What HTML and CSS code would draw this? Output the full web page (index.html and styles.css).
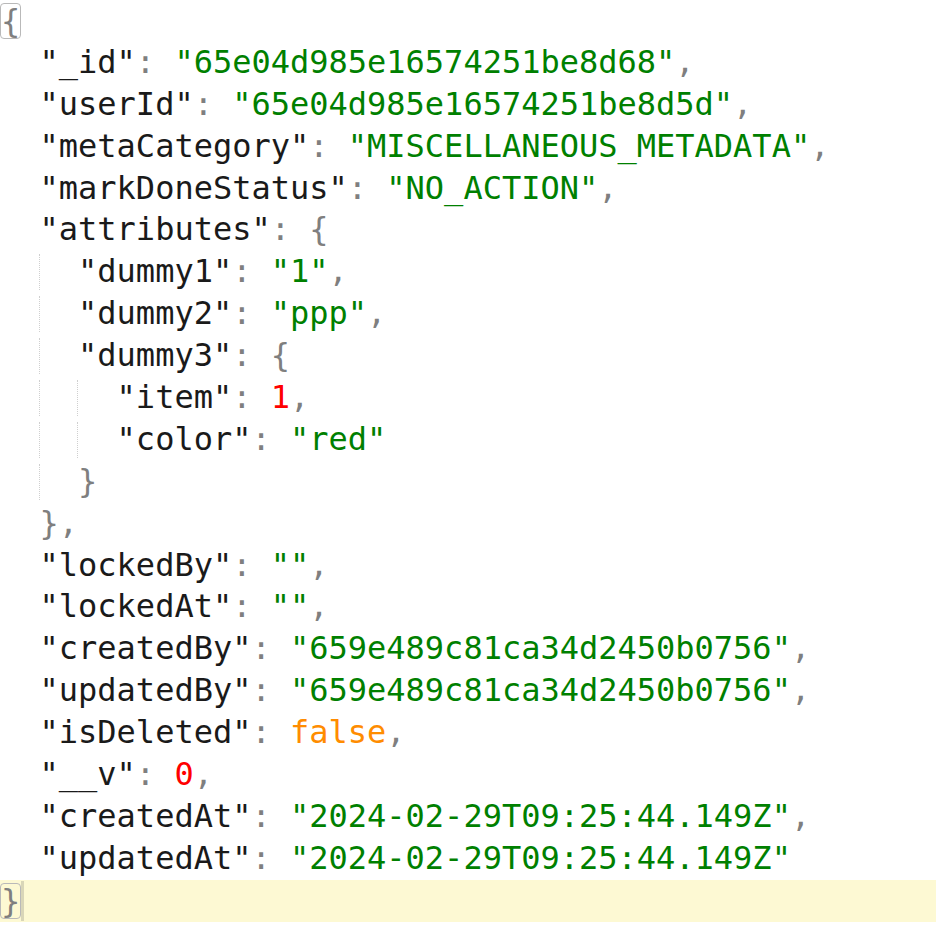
FILE: index.html
```html
<!DOCTYPE html>
<html>
<head>
<meta charset="utf-8">
<link rel="stylesheet" href="styles.css">
</head>
<body>
<div class="editor">
  <div class="line"><span class="brace match">{</span></div>
  <div class="line"><span class="ind"></span><span class="k">"_id"</span><span class="p">: </span><span class="s">"65e04d985e16574251be8d68"</span><span class="p">,</span></div>
  <div class="line"><span class="ind"></span><span class="k">"userId"</span><span class="p">: </span><span class="s">"65e04d985e16574251be8d5d"</span><span class="p">,</span></div>
  <div class="line"><span class="ind"></span><span class="k">"metaCategory"</span><span class="p">: </span><span class="s">"MISCELLANEOUS_METADATA"</span><span class="p">,</span></div>
  <div class="line"><span class="ind"></span><span class="k">"markDoneStatus"</span><span class="p">: </span><span class="s">"NO_ACTION"</span><span class="p">,</span></div>
  <div class="line"><span class="ind"></span><span class="k">"attributes"</span><span class="p">: {</span></div>
  <div class="line"><span class="ind"></span><span class="ind g"></span><span class="k">"dummy1"</span><span class="p">: </span><span class="s">"1"</span><span class="p">,</span></div>
  <div class="line"><span class="ind"></span><span class="ind g"></span><span class="k">"dummy2"</span><span class="p">: </span><span class="s">"ppp"</span><span class="p">,</span></div>
  <div class="line"><span class="ind"></span><span class="ind g"></span><span class="k">"dummy3"</span><span class="p">: {</span></div>
  <div class="line"><span class="ind"></span><span class="ind g"></span><span class="ind g"></span><span class="k">"item"</span><span class="p">: </span><span class="n">1</span><span class="p">,</span></div>
  <div class="line"><span class="ind"></span><span class="ind g"></span><span class="ind g"></span><span class="k">"color"</span><span class="p">: </span><span class="s">"red"</span></div>
  <div class="line"><span class="ind"></span><span class="ind g"></span><span class="p">}</span></div>
  <div class="line"><span class="ind"></span><span class="p">},</span></div>
  <div class="line"><span class="ind"></span><span class="k">"lockedBy"</span><span class="p">: </span><span class="s">""</span><span class="p">,</span></div>
  <div class="line"><span class="ind"></span><span class="k">"lockedAt"</span><span class="p">: </span><span class="s">""</span><span class="p">,</span></div>
  <div class="line"><span class="ind"></span><span class="k">"createdBy"</span><span class="p">: </span><span class="s">"659e489c81ca34d2450b0756"</span><span class="p">,</span></div>
  <div class="line"><span class="ind"></span><span class="k">"updatedBy"</span><span class="p">: </span><span class="s">"659e489c81ca34d2450b0756"</span><span class="p">,</span></div>
  <div class="line"><span class="ind"></span><span class="k">"isDeleted"</span><span class="p">: </span><span class="b">false</span><span class="p">,</span></div>
  <div class="line"><span class="ind"></span><span class="k">"__v"</span><span class="p">: </span><span class="n">0</span><span class="p">,</span></div>
  <div class="line"><span class="ind"></span><span class="k">"createdAt"</span><span class="p">: </span><span class="s">"2024-02-29T09:25:44.149Z"</span><span class="p">,</span></div>
  <div class="line"><span class="ind"></span><span class="k">"updatedAt"</span><span class="p">: </span><span class="s">"2024-02-29T09:25:44.149Z"</span></div>
  <div class="line active"><span class="brace match">}</span><span class="cursor"></span></div>
</div>
</body>
</html>
```
FILE: styles.css
```css
html, body {
  margin: 0;
  padding: 0;
  background: #ffffff;
}
.editor {
  font-family: "DejaVu Sans Mono", monospace;
  font-size: 32px;
  line-height: 41.9px;
  color: #1a1a1a;
  padding-left: 1px;
}
.line {
  white-space: pre;
  height: 41.9px;
  display: flex;
  align-items: center;
}
.line.active {
  background: #fdf9d3;
  margin-left: -1px;
  padding-left: 1px;
}
.ind {
  display: inline-block;
  width: 2ch;
  height: 100%;
  box-sizing: border-box;
}
.ind.g {
  border-left: 1px dotted #cfcfcf;
  margin-left: -1px;
  width: calc(2ch + 1px);
  height: 36px;
}
.k { color: #1a1a1a; }
.p { color: #7f7f7f; }
.s { color: #008000; }
.n { color: #ff0000; }
.b { color: #ff8c00; }
.brace { color: #7f7f7f; }
.match {
  outline: 1px solid #b9b9b9;
  border-radius: 3px;
  line-height: 34px;
  display: inline-block;
}
.cursor {
  display: inline-block;
  width: 3px;
  height: 40px;
  background: #d9d6b8;
  margin-left: 1px;
}
```
